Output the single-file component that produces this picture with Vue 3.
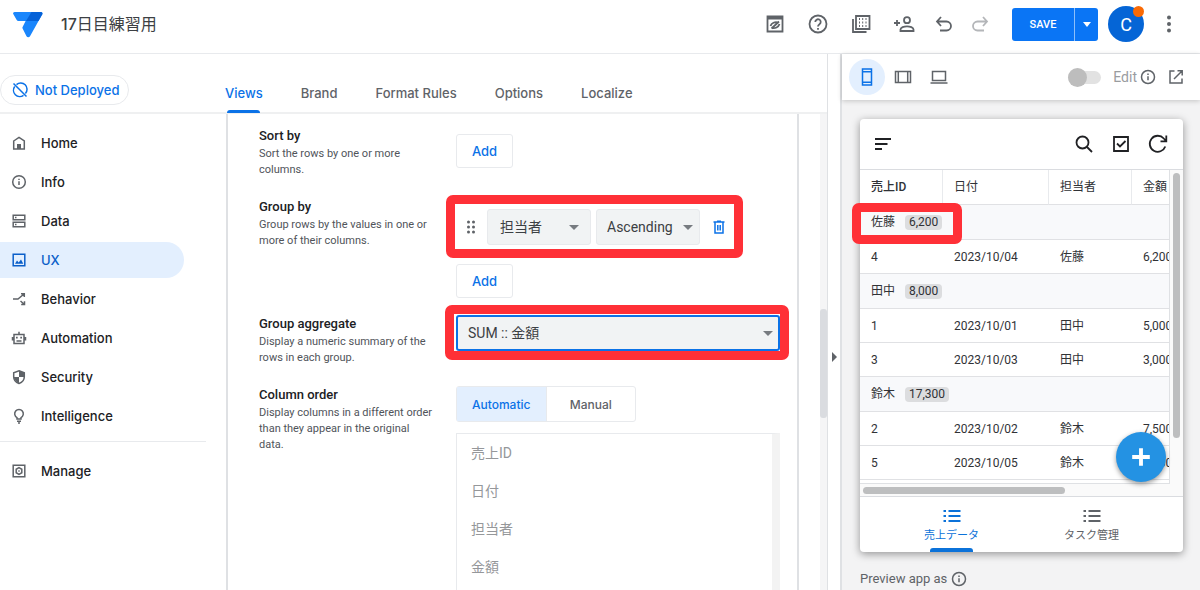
<template>
  <div class="editor">
    <header class="topbar">
      <svg class="logo" viewBox="0 0 30 27" aria-hidden="true">
        <path fill="#1a86fc" d="M1.5 1H28a1.5 1.5 0 0 1 1.3 2.2L17 25.2a2 2 0 0 1-3.5 0L9.6 17.5a1.5 1.5 0 0 1 0-1.4L12.6 10H5.4a2 2 0 0 1-1.7-1L.4 3.200A1.500 1.500 0 0 1 1.500 1z" />
        <path fill="#0562d8" d="M18.500 1H28a1.500 1.500 0 0 1 1.300 2.200L25.500 10h-12.500z" />
      </svg>
      <h1 class="app-name"><strong>17</strong>日目練習用</h1>

      <div class="tools">
        <button v-for="t in tools" :key="t.name" class="icon-btn" :title="t.name">
          <svg viewBox="0 0 24 24" class="stroke"><path v-for="d in t.paths" :key="d" :d="d" /></svg>
        </button>
      </div>
      <div class="history">
        <button class="icon-btn" title="Undo">
          <svg viewBox="0 0 24 24" class="stroke"><path d="M9 5 5 9.500 9 14M5.500 9.500H14.500a4.500 4.500 0 0 1 0 9H8" /></svg>
        </button>
        <button class="icon-btn faded" title="Redo" disabled>
          <svg viewBox="0 0 24 24" class="stroke"><path d="m15 5 4 4.500-4 4.500M18.500 9.500H9.500a4.500 4.500 0 0 0 0 9H16" /></svg>
        </button>
      </div>
      <div class="save">
        <button class="save-main">SAVE</button>
        <button class="save-more" title="Save options"><i class="caret"></i></button>
      </div>
      <button class="avatar" title="Account">C<i class="avatar-dot"></i></button>
      <button class="icon-btn more" title="More">
        <svg viewBox="0 0 24 24"><circle cx="12" cy="5.500" r="2" /><circle cx="12" cy="12" r="2" /><circle cx="12" cy="18.500" r="2" /></svg>
      </button>
    </header>

    <div class="body">
      <div class="workspace">
        <div class="subbar">
          <div class="deploy">
            <button class="chip">
              <svg viewBox="0 0 16 16" class="stroke"><path d="M4.500 2.600a6.300 6.300 0 0 1 8.900 8.900M11.500 13.300A6.300 6.300 0 0 1 2.700 4.500M1.500 1.500l13 13" /></svg>
              Not Deployed
            </button>
          </div>
          <nav class="tabs">
            <a v-for="t in tabs" :key="t" href="#" :class="{ active: t === activeTab }" @click.prevent="activeTab = t">{{ t }}</a>
          </nav>
        </div>

        <div class="main">
          <nav class="sidebar">
            <template v-for="n in navItems" :key="n.name">
              <hr v-if="n.name === 'Manage'" />
              <a href="#" :class="{ active: n.name === activeNav }" @click.prevent="activeNav = n.name">
                <svg viewBox="0 0 16 16" class="stroke">
                  <path v-for="d in n.paths" :key="d" :d="d" />
                  <path v-for="d in n.fills || []" :key="d" :d="d" class="solid" />
                </svg>
                {{ n.name }}
              </a>
            </template>
          </nav>

          <section class="settings">
            <div class="row sort-row">
              <div class="info">
                <h2>Sort by</h2>
                <p>Sort the rows by one or more columns.</p>
              </div>
              <div class="control"><button class="add-btn">Add</button></div>
            </div>

            <div class="row group-row">
              <div class="info">
                <h2>Group by</h2>
                <p>Group rows by the values in one or more of their columns.</p>
              </div>
              <div class="control">
                <div class="group-line">
                  <svg class="grip" viewBox="0 0 8 14"><circle v-for="i in 6" :key="i" :cx="i % 2 ? 1.500 : 6.500" :cy="Math.ceil(i / 2) * 5 - 3" r="1.500" /></svg>
                  <span class="select-box">
                    <select v-model="groupColumn" aria-label="Group column">
                      <option v-for="c in columns" :key="c">{{ c }}</option>
                    </select>
                  </span>
                  <span class="select-box order">
                    <select v-model="groupOrder" aria-label="Group order">
                      <option>Ascending</option>
                      <option>Descending</option>
                    </select>
                  </span>
                  <button class="trash" title="Delete">
                    <svg viewBox="0 0 12 14" class="stroke"><path d="M.5 2h11M4 1.200h4M2 2.500V13h8V2.500M4.800 5v5.500M7.200 5v5.500" /></svg>
                  </button>
                  <span class="mark mark-group"></span>
                </div>
                <button class="add-btn">Add</button>
              </div>
            </div>

            <div class="row">
              <div class="info">
                <h2><label for="aggregate">Group aggregate</label></h2>
                <p>Display a numeric summary of the rows in each group.</p>
              </div>
              <div class="control">
                <span class="select-box wide">
                  <select id="aggregate" v-model="aggregate">
                    <option>SUM :: 金額</option>
                    <option>NONE</option>
                  </select>
                  <span class="mark mark-aggregate"></span>
                </span>
              </div>
            </div>

            <div class="row">
              <div class="info">
                <h2>Column order</h2>
                <p>Display columns in a different order than they appear in the original data.</p>
              </div>
              <div class="control">
                <div class="segment">
                  <button v-for="m in ['Automatic', 'Manual']" :key="m" :class="{ active: m === orderMode }" @click="orderMode = m">{{ m }}</button>
                </div>
                <ul class="column-list">
                  <li v-for="c in columns" :key="c">{{ c }}</li>
                </ul>
              </div>
            </div>
          </section>
          <div class="scroll-track"><div class="scroll-thumb"></div></div>
        </div>
      </div>

      <button class="collapser" title="Collapse preview"><i></i></button>

      <aside class="preview">
        <div class="device-bar">
          <button class="device active" title="Phone">
            <svg viewBox="0 0 20 20" class="stroke"><path d="M5.500 2h9v16h-9zM5.500 4.800h9M5.500 15.200h9" /></svg>
          </button>
          <button class="device" title="Tablet">
            <svg viewBox="0 0 20 20" class="stroke"><path d="M2.500 4.500h15v11h-15zM5.300 4.500v11M14.700 4.500v11" /></svg>
          </button>
          <button class="device" title="Desktop">
            <svg viewBox="0 0 20 20" class="stroke"><path d="M3.500 4.500h13v9h-13zM1.500 16h17" /></svg>
          </button>
          <label class="toggle"><input type="checkbox" disabled /><span class="switch"></span>Edit</label>
          <svg class="info-icon stroke" viewBox="0 0 16 16"><path d="M8 1.500a6.500 6.500 0 1 1 0 13 6.500 6.500 0 0 1 0-13M8 7.200v4M8 4.500v1.500" /></svg>
          <button class="open-btn" title="Open in new window">
            <svg viewBox="0 0 16 16" class="stroke"><path d="M6.500 2H2v12h12V9.500M9.500 1.800h4.700v4.700M14 2 6 10" /></svg>
          </button>
        </div>

        <div class="stage">
          <div class="phone">
            <div class="phone-head">
              <button title="Menu"><svg viewBox="0 0 20 20" class="stroke"><path d="M2 5h16M2 10h12.500M2 15h7" /></svg></button>
              <span class="spacer"></span>
              <button title="Search"><svg viewBox="0 0 20 20" class="stroke"><circle cx="8.500" cy="8.500" r="6" /><path d="m13 13 5 5" /></svg></button>
              <button title="Select"><svg viewBox="0 0 20 20" class="stroke"><path d="M3 3h14v14H3zM6 9.500l3 3 5.500-5.500" /></svg></button>
              <button title="Sync"><svg viewBox="0 0 20 20" class="stroke"><path d="M17.300 12.500A8 8 0 1 1 15.800 4.500L18 6.800M18.300 1.500v5.800h-5.800" /></svg></button>
            </div>

            <div class="grid-area">
              <div class="table-clip">
                <table>
                  <colgroup><col class="c-id" /><col class="c-date" /><col class="c-person" /><col /></colgroup>
                  <thead>
                    <tr><th v-for="(c, i) in columns" :key="c" :class="{ key: i === 0 }">{{ c }}</th></tr>
                  </thead>
                  <tbody v-for="g in groups" :key="g.name">
                    <tr class="group"><td colspan="4">{{ g.name }}<span class="sum">{{ g.sum }}</span></td></tr>
                    <tr v-for="r in g.rows" :key="r[0]">
                      <td>{{ r[0] }}</td>
                      <td>{{ r[1] }}</td>
                      <td>{{ g.name }}</td>
                      <td>{{ r[2] }}</td>
                    </tr>
                  </tbody>
                </table>
              </div>
              <div class="v-track"><div class="v-thumb"></div></div>
              <div class="h-thumb"></div>
              <button class="fab" title="Add"><svg viewBox="0 0 20 20"><path d="M10 2v16M2 10h16" /></svg></button>
            </div>

            <nav class="phone-nav">
              <a v-for="v in views" :key="v" href="#" :class="{ active: v === activeView }" @click.prevent="activeView = v">
                <svg viewBox="0 0 18 14" class="stroke"><path d="M5.500 2H17.500M5.500 7H17.500M5.500 12H17.500M.5 2h2.500M.5 7h2.500M.5 12h2.500" /></svg>
                {{ v }}
              </a>
            </nav>
            <span class="mark mark-sum"></span>
          </div>
          <div class="preview-as">
            Preview app as
            <svg class="info-icon stroke" viewBox="0 0 16 16"><path d="M8 1.500a6.500 6.500 0 1 1 0 13 6.500 6.500 0 0 1 0-13M8 7.200v4M8 4.500v1.500" /></svg>
          </div>
        </div>
      </aside>
    </div>
  </div>
</template>

<script setup>
import { ref } from 'vue'

const tabs = ['Views', 'Brand', 'Format Rules', 'Options', 'Localize']
const activeTab = ref('Views')
const activeNav = ref('UX')
const groupColumn = ref('担当者')
const groupOrder = ref('Ascending')
const aggregate = ref('SUM :: 金額')
const orderMode = ref('Automatic')
const columns = ['売上ID', '日付', '担当者', '金額']
const views = ['売上データ', 'タスク管理']
const activeView = ref('売上データ')

const tools = [
  { name: 'Preview', paths: ['M4.500 4.500h15v15h-15zM4.500 6.500h15', 'M7.500 14c1-3 4.500-4.500 7.500-3.500M9 16c3 .8 6.500-.8 7.500-4M8.500 16.500l7.500-7'] },
  { name: 'Help', paths: ['M12 3.500a8.500 8.500 0 1 1 0 17 8.500 8.500 0 0 1 0-17', 'M9.300 10a2.700 2.700 0 1 1 4.200 2.200C12.500 12.900 12 13.300 12 14.500M12 16v1.800'] },
  { name: 'Samples', paths: ['M7 4h13.500v13H7zM4 7v13h13.500', 'M10 7h1M13.200 7h1M16.500 7h1M10 10.500h1M13.200 10.500h1M16.500 10.500h1M10 14h1M13.200 14h1M16.500 14h1'] },
  { name: 'Share', paths: ['M15 5.200a3 3 0 1 1 0 6 3 3 0 0 1 0-6M8.500 19v-1.500c0-2 3.500-3.200 6.500-3.200s6.500 1.200 6.500 3.200V19z', 'M5 8v6M2 11h6'] }
]

const navItems = [
  { name: 'Home', paths: ['M2.700 6 8 2.300 13.300 6v8H2.700z'], fills: ['M6 9h4v5H6z'] },
  { name: 'Info', paths: ['M8 1.700a6.300 6.300 0 1 1 0 12.600A6.300 6.300 0 0 1 8 1.700M8 7.300v3.700M8 4.800v1.300'] },
  { name: 'Data', paths: ['M2.200 2.200h11.600v4.500H2.200zM2.200 9.300h11.600v4.500H2.200zM4 4.500h1.500M4 11.500h1.500'] },
  { name: 'UX', paths: ['M2.200 2.200h11.600v11.600H2.200z'], fills: ['M4 11.800 6 8.500l1.700 2L10 7.500l2.300 4.300z'] },
  { name: 'Behavior', paths: ['M2 8h5L13 3M10 2.700h3.300V6M9.500 10l4 3.500M10.200 13.500h3.300v-3.300'] },
  { name: 'Automation', paths: ['M3 4.500h10v9H3zM1.500 7v3.500M14.500 7v3.500M5.500 11h5M8 1.700v2.500'], fills: ['M5 6.700h1.700v1.700H5zM9.300 6.700H11v1.700H9.300z'] },
  { name: 'Security', paths: ['M8 1.700 13.300 3.700v4c0 3-2.300 5.700-5.300 6.800-3-1.100-5.300-3.800-5.300-6.800v-4z'], fills: ['M8 1.700 13.300 3.700V8H8z', 'M2.700 8H8v6.300C5 13 3 10.500 2.700 8z'] },
  { name: 'Intelligence', paths: ['M6 11V9.600a4.300 4.300 0 1 1 4 0V11zM6 13.300h4M7 15h2'] },
  { name: 'Manage', paths: ['M2.200 2.200h11.600v11.600H2.200z', 'M8 4.700 10.800 6.300v3.400L8 11.300 5.200 9.700V6.300zM7.300 8h1.400'] }
]

const groups = [
  { name: '佐藤', sum: '6,200', rows: [['4', '2023/10/04', '6,200']] },
  { name: '田中', sum: '8,000', rows: [['1', '2023/10/01', '5,000'], ['3', '2023/10/03', '3,000']] },
  { name: '鈴木', sum: '17,300', rows: [['2', '2023/10/02', '7,500'], ['5', '2023/10/05', '9,800']] }
]
</script>

<style>
body {
  margin: 0;
  overflow: hidden;
}
</style>

<style scoped>
.editor {
  display: flex;
  flex-direction: column;
  height: 100vh;
  background: #fff;
  color: #202124;
  font-family: Roboto, "Noto Sans CJK JP", sans-serif;
  font-size: 12px;
}

.editor *,
.editor *::after {
  box-sizing: border-box;
}

button,
select {
  font: inherit;
  color: inherit;
}

button {
  padding: 0;
  border: none;
  background: none;
  cursor: pointer;
}

a {
  color: inherit;
  text-decoration: none;
}

svg {
  display: block;
  flex: none;
  fill: currentColor;
}

.stroke {
  fill: none;
  stroke: currentColor;
  stroke-width: 1.5;
}

.stroke .solid {
  fill: currentColor;
  stroke: none;
}

/* top bar */
.topbar {
  display: flex;
  align-items: center;
  flex: none;
  height: 54px;
  padding: 0 19px 5px 13px;
  border-bottom: 1px solid #e8eaed;
  color: #5f6368;
}

.logo {
  width: 30px;
  height: 27px;
}

.app-name {
  flex: 1;
  margin: 0 0 0 18px;
  color: #3c4043;
  font-family: Inter, "Noto Sans CJK JP", sans-serif;
  font-size: 16px;
  font-weight: 400;
  line-height: 20px;
}

.app-name strong {
  font-weight: 500;
}

.tools,
.history {
  display: flex;
  gap: 19px;
}

.history {
  gap: 12px;
  margin: 0 20px 0 16px;
}

.icon-btn svg {
  width: 24px;
  height: 24px;
}

.icon-btn .stroke {
  stroke-width: 1.8;
}

.faded {
  color: #b4b6b9;
}

.save {
  display: flex;
  height: 33px;
  border-radius: 3px;
  overflow: hidden;
  background: #0a75f5;
  color: #fff;
}

.save-main {
  width: 62px;
  font-size: 11px;
  font-weight: 500;
}

.save-more {
  display: flex;
  align-items: center;
  justify-content: center;
  width: 24px;
  border-left: 1px solid #8dbffa;
}

.caret {
  border: 4px solid transparent;
  border-top: 5px solid #fff;
  border-bottom: none;
}

.avatar {
  position: relative;
  width: 36px;
  height: 36px;
  margin: 0 13px 0 10px;
  border-radius: 50%;
  background: #0565d6;
  color: #fff;
  font-size: 18px;
}

.avatar-dot {
  position: absolute;
  top: 0;
  right: 0;
  width: 11px;
  height: 11px;
  border-radius: 50%;
  background: #fa6a05;
}

/* workspace */
.body {
  display: flex;
  flex: 1;
  min-height: 0;
}

.workspace {
  display: flex;
  flex: 1;
  flex-direction: column;
  min-width: 0;
}

.subbar {
  display: flex;
  flex: none;
  height: 60px;
  border-bottom: 2px solid #eff0f1;
  font-family: Inter, sans-serif;
  font-size: 13px;
  font-weight: 500;
}

.deploy {
  width: 225px;
  padding-top: 21px;
}

.chip {
  display: flex;
  align-items: center;
  gap: 7px;
  height: 30px;
  padding: 0 9px 0 11px;
  border: 1px solid #e8eaed;
  border-radius: 15px;
  color: #0b72e7;
}

.chip svg {
  width: 16px;
  height: 16px;
}

.tabs {
  display: flex;
  gap: 38px;
  color: #5f6368;
}

.tabs a {
  position: relative;
  padding-top: 19px;
  line-height: 40px;
}

.tabs .active {
  color: #0b72e7;
}

.tabs .active::after {
  content: '';
  position: absolute;
  right: 3px;
  bottom: -1px;
  left: 2px;
  height: 3px;
  border-radius: 3px 3px 0 0;
  background: #0b72e7;
}

.main {
  display: flex;
  flex: 1;
  min-height: 0;
  overflow: hidden;
}

.sidebar {
  display: flex;
  flex: none;
  flex-direction: column;
  gap: 3px;
  width: 226px;
  padding-top: 11px;
  font-family: Inter, sans-serif;
  font-size: 13px;
  font-weight: 500;
}

.sidebar a {
  display: flex;
  align-items: center;
  gap: 14px;
  width: 184px;
  height: 36px;
  padding-left: 11px;
  border-radius: 0 18px 18px 0;
}

.sidebar svg {
  width: 16px;
  height: 16px;
  color: #5f6368;
}

.sidebar .active,
.sidebar .active svg {
  color: #0b5fc9;
}

.sidebar .active {
  background: #e3effe;
}

.sidebar hr {
  width: 206px;
  margin: 4px 0 8px;
  border: none;
  border-top: 1px solid #e8eaed;
}

.settings {
  flex: 1;
  min-width: 0;
  padding: 12px 17px 0 31px;
  border: solid #dfe1e4;
  border-width: 0 2px;
}

.row {
  display: grid;
  grid-template-columns: 181px minmax(0, 1fr);
  gap: 16px;
  margin-bottom: 19px;
}

.info h2 {
  margin: 0;
  font-size: 13px;
  font-weight: 500;
  line-height: 20px;
}

.info p {
  max-width: 176px;
  margin: 0;
  color: #50545a;
  font-size: 11px;
  line-height: 16px;
}

.control {
  padding-top: 1px;
}

.sort-row .control {
  padding-top: 8px;
}

.group-row {
  margin-bottom: 16px;
}

.group-row .control {
  padding-top: 12px;
}

.add-btn {
  display: block;
  width: 57px;
  height: 34px;
  border: 1px solid #e8eaed;
  border-radius: 3px;
  color: #0b72e7;
  font-family: Inter, sans-serif;
  font-weight: 500;
  font-size: 13px;
}

.group-line {
  position: relative;
  display: flex;
  align-items: center;
  margin-bottom: 19px;
}

.grip {
  width: 8px;
  height: 14px;
  margin: 0 12px 0 11px;
  color: #5f6368;
}

.select-box {
  position: relative;
  display: block;
  width: 104px;
  margin-right: 5px;
}

.select-box::after {
  content: '';
  position: absolute;
  top: 16px;
  right: 12px;
  border: 5px solid transparent;
  border-top-color: #777b80;
  border-bottom: none;
  pointer-events: none;
}

.select-box select {
  appearance: none;
  display: block;
  width: 100%;
  height: 36px;
  padding: 0 12px;
  border: 1px solid #e8eaed;
  border-radius: 3px;
  background: #f1f3f4;
  color: #3c4043;
  font-size: 14px;
}

.order {
  margin-right: 13px;
}

.order select {
  padding: 0 10px;
}

.order::after {
  right: 7px;
}

.wide {
  width: auto;
  margin: 0;
}

.wide select {
  padding: 0 10px;
  border: 2px solid #0b72e7;
}

.wide::after {
  right: 7px;
}

.trash {
  color: #0b72e7;
}

.trash svg {
  width: 12px;
  height: 14px;
}

/* red highlight frames */
.mark {
  position: absolute;
  z-index: 2;
  border: 9px solid #ff3037;
  border-radius: 7px;
  pointer-events: none;
}

.mark-group {
  top: -14px;
  left: -10px;
  width: 297px;
  height: 63px;
}

.mark-aggregate {
  inset: -10px -9px -9px -11px;
}

.mark-sum {
  top: 84px;
  left: -8px;
  width: 110px;
  height: 41px;
}

.segment {
  display: flex;
  width: 180px;
  height: 36px;
  border: 1px solid #e8eaed;
  border-radius: 3px;
  font-family: Inter, sans-serif;
  font-weight: 500;
  color: #5f6368;
}

.segment button {
  flex: 1;
}

.segment button + button {
  border-left: 1px solid #e8eaed;
}

.segment .active {
  background: #e3effe;
  color: #0b72e7;
}

.column-list {
  margin: 11px 0 0;
  padding: 0 14px 38px;
  border: 1px solid #e8eaed;
  border-right: 8px solid #f3f3f3;
  list-style: none;
  color: #95979a;
  font-size: 14px;
  line-height: 38px;
}

.scroll-track {
  flex: none;
  width: 7px;
  margin-left: 21px;
  background: #f5f5f6;
}

.scroll-thumb {
  height: 109px;
  margin-top: 195px;
  border-radius: 3px;
  background: #dadce0;
}

.collapser {
  display: flex;
  flex: none;
  align-items: flex-start;
  justify-content: center;
  width: 15px;
  padding-top: 298px;
  border: solid #dfe1e4;
  border-width: 0 2px 0 1px;
  border-radius: 0;
}

.collapser i {
  border: 5px solid transparent;
  border-left-color: #5f6368;
  border-right: none;
}

/* preview */
.preview {
  display: flex;
  flex: none;
  flex-direction: column;
  width: 358px;
  background: #f3f3f4;
}

.device-bar {
  z-index: 1;
  display: flex;
  flex: none;
  align-items: center;
  height: 46px;
  padding: 0 16px 0 7px;
  background: #fff;
  box-shadow: 0 1px 5px rgba(0, 0, 0, 0.2);
  color: #5f6368;
}

.device {
  display: flex;
  align-items: center;
  justify-content: center;
  width: 36px;
  height: 36px;
  border-radius: 50%;
}

.device.active {
  background: #e3effe;
  color: #0b72e7;
}

.device svg {
  width: 20px;
  height: 20px;
}

.toggle {
  display: flex;
  align-items: center;
  margin-left: auto;
  color: #9a9c9f;
  font-size: 14px;
}

.toggle input {
  position: absolute;
  opacity: 0;
}

.switch {
  position: relative;
  width: 33px;
  height: 13px;
  margin-right: 12px;
  border-radius: 7px;
  background: #e2e2e2;
}

.switch::after {
  content: '';
  position: absolute;
  top: -3px;
  left: 0;
  width: 19px;
  height: 19px;
  border-radius: 50%;
  background: #bdbdbd;
}

.info-icon {
  width: 16px;
  height: 16px;
}

.device-bar .info-icon {
  margin: 0 12px 0 3px;
}

.open-btn svg {
  width: 16px;
  height: 16px;
}

.stage {
  flex: 1;
  min-height: 0;
  padding: 19px 17px 0 18px;
}

.phone {
  position: relative;
  border-radius: 4px;
  background: #fff;
  box-shadow: 0 2px 8px rgba(0, 0, 0, 0.4);
}

.phone-head {
  display: flex;
  align-items: center;
  gap: 17px;
  height: 51px;
  padding: 0 15px 0 13px;
  border-bottom: 1px solid #dadce0;
}

.phone-head svg {
  width: 20px;
  height: 20px;
  stroke-width: 1.8;
}

.spacer {
  flex: 1;
}

.grid-area {
  position: relative;
  display: grid;
  grid-template-columns: minmax(0, 1fr) 13px;
  padding-bottom: 12px;
  border-bottom: 1px solid #dadce0;
  background: #fafafa;
}

.table-clip {
  overflow: hidden;
  height: 314px;
  border: solid #dfe1e4;
  border-width: 0 1px 1px 0;
  background: #fff;
}

table {
  width: 390px;
  table-layout: fixed;
  border-collapse: separate;
  border-spacing: 0;
  color: #303236;
}

.c-id {
  width: 83px;
}

.c-date {
  width: 106px;
}

.c-person {
  width: 83px;
}

th,
td {
  height: 34px;
  padding: 0 11px;
  border-bottom: 1px solid #e0e1e4;
  line-height: 20px;
  text-align: left;
}

th {
  height: 35px;
  border-right: 1px solid #e8eaed;
  font-weight: 400;
}

th.key {
  font-weight: 500;
}

.group td {
  height: 35px;
  background: #f8f9fb;
}

.sum {
  display: inline-block;
  margin-left: 10px;
  padding: 0 4px;
  border-radius: 4px;
  background: #dcdddf;
  line-height: 15px;
}

.v-track {
  padding: 3px 3px 0;
}

.v-thumb {
  height: 265px;
  border-radius: 4px;
  background: #bdbebf;
}

.h-thumb {
  position: absolute;
  bottom: 2px;
  left: 3px;
  width: 202px;
  height: 7px;
  border-radius: 4px;
  background: #bdbebf;
}

.fab {
  position: absolute;
  right: 17px;
  bottom: 14px;
  display: flex;
  align-items: center;
  justify-content: center;
  width: 50px;
  height: 50px;
  border-radius: 50%;
  background: #2492e3;
  box-shadow: 0 2px 5px rgba(0, 0, 0, 0.4);
}

.fab svg {
  width: 22px;
  height: 22px;
  stroke: #fff;
  stroke-width: 3.5;
}

.phone-nav {
  display: flex;
  justify-content: center;
  height: 55px;
  color: #5f6368;
}

.phone-nav a {
  position: relative;
  display: flex;
  flex-direction: column;
  align-items: center;
  gap: 4px;
  width: 140px;
  padding-top: 12px;
  font-size: 11px;
  line-height: 18px;
}

.phone-nav svg {
  width: 18px;
  height: 14px;
  stroke-width: 2;
}

.phone-nav .active {
  color: #0b72d9;
}

.phone-nav .active::after {
  content: '';
  position: absolute;
  bottom: 0;
  width: 43px;
  height: 4px;
  border-radius: 3px 3px 0 0;
  background: #0b72d9;
}

.preview-as {
  display: flex;
  align-items: center;
  gap: 4px;
  margin-top: 17px;
  color: #5f6368;
  font-size: 13px;
  line-height: 20px;
}
</style>
